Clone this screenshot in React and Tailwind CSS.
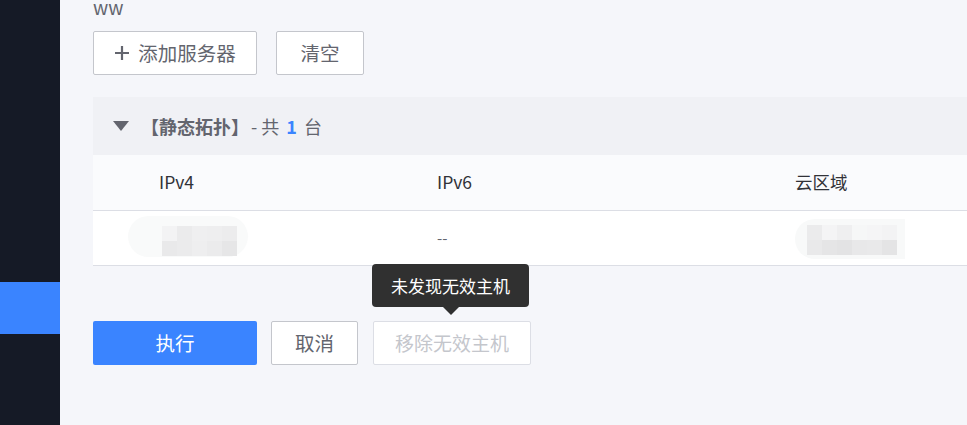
import React from 'react';

const font = { fontFamily: '"Noto Sans CJK SC", "Noto Sans", sans-serif' };

function Mosaic({ rows }) {
  return (
    <div className="flex flex-col">
      {rows.map((row, r) => (
        <div key={r} className="flex">
          {row.map((c, i) => (
            <div key={i} className="w-[15px] h-[15px]" style={{ background: c }} />
          ))}
        </div>
      ))}
    </div>
  );
}

const ipRows = [
  ['#f3f3f4', '#ebebec', '#efeff0', '#eeeeef', '#ececed'],
  ['#e9e9ea', '#ebebec', '#eeeeef', '#ebebec', '#e6e6e7'],
];
const cloudRows = [
  ['#ebebec', '#f4f4f5', '#efeff0', '#f6f7f7', '#f5f5f6', '#f3f3f4'],
  ['#e9e9ea', '#e5e5e6', '#e3e3e4', '#e8e8e9', '#e9e9ea', '#e4e4e5'],
];

export default function App() {
  return (
    <div className="flex h-[425px] w-[967px] overflow-hidden bg-[#f5f6fa]" style={font}>
      {/* Sidebar */}
      <div className="w-[60px] shrink-0 bg-[#151a26] flex flex-col">
        <div className="h-[282px]" />
        <div className="h-[52px] bg-[#3a84ff]" />
      </div>

      {/* Main */}
      <div className="flex-1 pl-[33px] flex flex-col">
        <div className="h-[20px] -mt-[3px] text-[19px] leading-[20px] text-[#63656e]">ww</div>

        {/* Top buttons */}
        <div className="flex gap-[19px] mt-[14px]">
          <button className="w-[164px] h-[44px] bg-white border border-[#c4c6cc] rounded-[2px] flex items-center justify-center gap-[8px] text-[19.5px] text-[#63656e]">
            <svg width="16" height="16" viewBox="0 0 16 16" className="shrink-0">
              <path d="M8 1v14M1 8h14" stroke="#63656e" strokeWidth="2.2" />
            </svg>
            添加服务器
          </button>
          <button className="w-[88px] h-[44px] bg-white border border-[#c4c6cc] rounded-[2px] text-[19.5px] text-[#63656e]">
            清空
          </button>
        </div>

        {/* Group */}
        <div className="mt-[22px]">
          <div className="h-[58px] bg-[#f0f1f5] flex items-center pl-[20px] text-[18px] text-[#63656e]">
            <svg width="16" height="10" viewBox="0 0 16 10" className="shrink-0">
              <path d="M0 0h16L8 10z" fill="#63656e" />
            </svg>
            <span className="ml-[12px] font-bold">【静态拓扑】</span>
            <span className="ml-[2px]">- 共</span>
            <span className="mx-[7px] font-bold text-[#3a84ff]">1</span>
            <span>台</span>
          </div>

          {/* Table */}
          <div className="grid grid-cols-[344px_358px_1fr] h-[56px] bg-[#fafbfd] border-b border-[#dcdee5] items-center text-[17.5px] text-[#313238]">
            <div className="pl-[66px]">IPv4</div>
            <div>IPv6</div>
            <div>云区域</div>
          </div>
          <div className="grid grid-cols-[344px_358px_1fr] h-[55px] bg-white border-b border-[#dcdee5] items-center text-[17px] text-[#63656e]">
            <div className="pl-[35px]">
              <div className="w-[120px] h-[41px] rounded-full bg-[#f9fafa] pl-[34px] pt-[10px] -mt-[3px]">
                <Mosaic rows={ipRows} />
              </div>
            </div>
            <div className="text-[15px] text-[#63656e]">--</div>
            <div>
              <div className="w-[110px] h-[40px] rounded-l-full rounded-r-[20px] bg-[#f8f9f9] pl-[12px] pt-[6px] mt-[1px]">
                <Mosaic rows={cloudRows} />
              </div>
            </div>
          </div>
        </div>

        {/* Action buttons */}
        <div className="flex mt-[55px]">
          <button className="w-[164px] h-[44px] bg-[#3a84ff] rounded-[2px] text-[19.5px] text-white">执行</button>
          <button className="ml-[14px] w-[87px] h-[44px] bg-white border border-[#c4c6cc] rounded-[2px] text-[19.5px] text-[#63656e]">
            取消
          </button>
          <div className="relative ml-[15px]">
            <div className="absolute left-[-1px] bottom-[58px] w-[157px] h-[43px] bg-[#303030] rounded-[4px] flex items-center justify-center text-[17px] text-white whitespace-nowrap">
              未发现无效主机
              <div className="absolute left-[70px] top-[42px] w-0 h-0 border-x-[9px] border-x-transparent border-t-[9px] border-t-[#303030]" />
            </div>
            <button className="w-[158px] h-[44px] bg-white border border-[#dcdee5] rounded-[2px] text-[19px] text-[#c4c6cc]">
              移除无效主机
            </button>
          </div>
        </div>
      </div>
    </div>
  );
}
